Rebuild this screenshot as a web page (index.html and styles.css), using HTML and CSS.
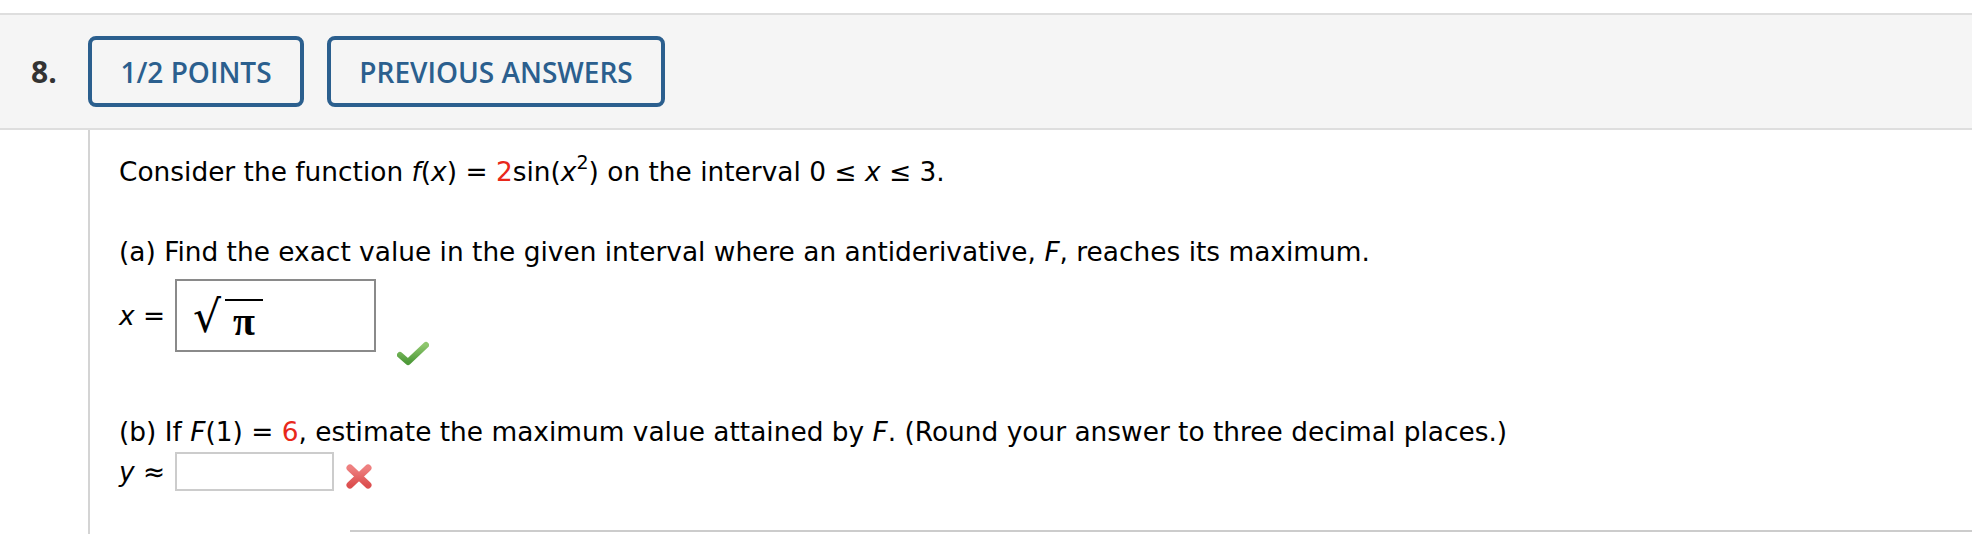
FILE: index.html
```html
<!DOCTYPE html>
<html>
<head>
<meta charset="utf-8">
<link rel="stylesheet" href="styles.css">
</head>
<body>
<div class="qheader">
  <span class="qnum">8.</span>
  <span class="pill pill-points">1/2 POINTS</span>
  <span class="pill pill-prev">PREVIOUS ANSWERS</span>
</div>
<div class="qbody">
  <p class="line l1">Consider the function <i>f</i>(<i>x</i>) = <span class="red">2</span>sin(<i>x</i><sup>2</sup>) on the interval 0 ≤ <i>x</i> ≤ 3.</p>
  <p class="line l2">(a) Find the exact value in the given interval where an antiderivative, <i>F</i>, reaches its maximum.</p>
  <div class="ansrow rowa">
    <span class="lbl"><i>x</i> =</span>
    <span class="box boxa"><span class="math"><span class="rad">√</span><span class="radicand">π</span></span></span>
    <svg class="mark check" viewBox="0 0 32 26" width="32" height="26">
      <defs>
        <linearGradient id="g" x1="0" y1="0" x2="0" y2="1">
          <stop offset="0" stop-color="#8fc76e"/>
          <stop offset="1" stop-color="#4f9a3a"/>
        </linearGradient>
      </defs>
      <path d="M3 14 L11 21 L29 4" fill="none" stroke="url(#g)" stroke-width="6" stroke-linecap="round" stroke-linejoin="round"/>
    </svg>
  </div>
  <p class="line l3">(b) If <i>F</i>(1) = <span class="red">6</span>, estimate the maximum value attained by <i>F</i>. (Round your answer to three decimal places.)</p>
  <div class="ansrow rowb">
    <span class="lbl"><i>y</i> ≈</span>
    <span class="box boxb"></span>
    <svg class="mark cross" viewBox="0 0 28 27" width="28" height="27">
      <defs>
        <linearGradient id="r" x1="0" y1="0" x2="0" y2="1">
          <stop offset="0" stop-color="#ee8080"/>
          <stop offset="1" stop-color="#dc4f4f"/>
        </linearGradient>
      </defs>
      <path d="M5 5 L23 22 M23 5 L5 22" fill="none" stroke="url(#r)" stroke-width="7" stroke-linecap="round"/>
    </svg>
  </div>
  <div class="footline"></div>
</div>
</body>
</html>
```

FILE: styles.css
```css
html, body {
  margin: 0;
  padding: 0;
  background: #ffffff;
}
body {
  width: 1972px;
  height: 534px;
  overflow: hidden;
  font-family: "DejaVu Sans", Verdana, sans-serif;
  color: #000;
}
.qheader {
  margin-top: 13px;
  height: 113px;
  background: #f5f5f5;
  border-top: 2px solid #dedede;
  border-bottom: 2px solid #dedede;
  display: flex;
  align-items: center;
  padding-left: 31px;
  box-sizing: content-box;
}
.qnum {
  font-family: "Open Sans", sans-serif;
  font-weight: 700;
  font-size: 30px;
  color: #333;
  width: 57px;
}
.pill {
  font-family: "Open Sans", sans-serif;
  font-weight: 600;
  font-size: 28px;
  color: #2b5f8e;
  border: 4px solid #2b5f8e;
  border-radius: 8px;
  height: 71px;
  box-sizing: border-box;
  display: flex;
  align-items: center;
  justify-content: center;
}
.pill-points {
  width: 216px;
}
.pill-prev {
  width: 338px;
  margin-left: 23px;
}
.qbody {
  margin-left: 88px;
  border-left: 2px solid #d4d4d4;
  height: 404px;
  padding-left: 29px;
  padding-top: 30px;
  box-sizing: border-box;
  position: relative;
}
.line {
  margin: 0;
  font-size: 26.4px;
  line-height: 24px;
}
.l2 { margin-top: 56px; }
.red { color: #e8281b; }
sup {
  font-size: 19px;
  line-height: 0;
  vertical-align: 12px;
}
.ansrow {
  display: flex;
  align-items: center;
}
.lbl {
  font-size: 26.4px;
  width: 56px;
  white-space: nowrap;
}
.rowa {
  margin-top: 13px;
  height: 76px;
}
.boxa {
  width: 201px;
  height: 73px;
  border: 2px solid #8a8a8a;
  box-sizing: border-box;
  display: flex;
  align-items: center;
  padding-left: 16px;
}
.math {
  font-family: "Liberation Serif", serif;
  display: inline-flex;
  align-items: flex-start;
  margin-top: 8px;
}
.rad {
  font-family: "DejaVu Sans", sans-serif;
  font-size: 44px;
  line-height: 36px;
  height: 38px;
  overflow: visible;
}
.radicand {
  border-top: 2px solid #000;
  padding: 4px 8px 0 8px;
  margin-left: 4px;
  font-size: 40px;
  line-height: 34px;
  font-weight: bold;
}
.check {
  align-self: flex-end;
  margin-left: 21px;
  margin-bottom: -14px;
}
.l3 { margin-top: 67px; }
.rowb {
  margin-top: 8px;
  height: 38px;
}
.boxb {
  width: 159px;
  height: 39px;
  border: 2px solid #cccccc;
  box-sizing: border-box;
}
.cross {
  margin-left: 11px;
  margin-top: 10px;
}
.footline {
  position: absolute;
  left: 260px;
  right: 0;
  bottom: 2px;
  border-top: 2px solid #cccccc;
}
```
